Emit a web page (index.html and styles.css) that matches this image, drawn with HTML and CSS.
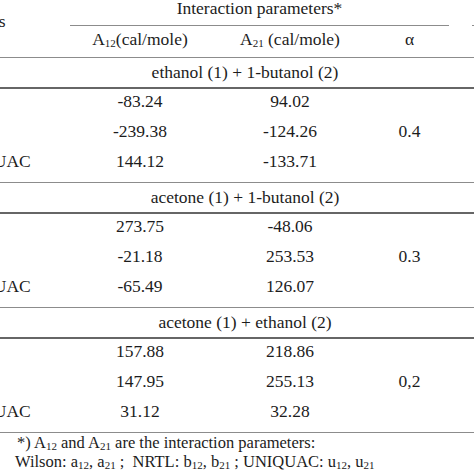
FILE: index.html
```html
<!DOCTYPE html>
<html lang="en">
<head>
  <meta charset="UTF-8" />
  <meta name="viewport" content="width=device-width, initial-scale=1.0" />
  <title>Interaction parameters</title>
  <link rel="stylesheet" href="styles.css">
</head>
<body>
  <div class="sheet">
    <div class="head">
      <div class="model-h">Models</div>
      <div class="span-h">Interaction parameters*</div>
      <div class="next-h"></div>
      <div class="col-h">A<sub>12</sub>(cal/mole)</div>
      <div class="col-h">A<sub>21</sub> (cal/mole)</div>
      <div class="col-h">α</div>
    </div>

    <div class="group">
      <div class="group-title">ethanol (1) + 1-butanol (2)</div>
      <div class="rows">
        <div class="row"><span class="model">Wilson</span><span>-83.24</span><span>94.02</span><span></span></div>
        <div class="row"><span class="model">NRTL</span><span>-239.38</span><span>-124.26</span><span>0.4</span></div>
        <div class="row"><span class="model">UNIQUAC</span><span>144.12</span><span>-133.71</span><span></span></div>
      </div>
    </div>

    <div class="group">
      <div class="group-title">acetone (1) + 1-butanol (2)</div>
      <div class="rows">
        <div class="row"><span class="model">Wilson</span><span>273.75</span><span>-48.06</span><span></span></div>
        <div class="row"><span class="model">NRTL</span><span>-21.18</span><span>253.53</span><span>0.3</span></div>
        <div class="row"><span class="model">UNIQUAC</span><span>-65.49</span><span>126.07</span><span></span></div>
      </div>
    </div>

    <div class="group">
      <div class="group-title">acetone (1) + ethanol (2)</div>
      <div class="rows">
        <div class="row"><span class="model">Wilson</span><span>157.88</span><span>218.86</span><span></span></div>
        <div class="row"><span class="model">NRTL</span><span>147.95</span><span>255.13</span><span>0,2</span></div>
        <div class="row"><span class="model">UNIQUAC</span><span>31.12</span><span>32.28</span><span></span></div>
      </div>
    </div>

    <div class="note">
      <p>*) A<sub>12</sub> and A<sub>21</sub> are the interaction parameters:</p>
      <p>Wilson: a<sub>12</sub>, a<sub>21</sub> ;&nbsp; NRTL: b<sub>12</sub>, b<sub>21</sub> ; UNIQUAC: u<sub>12</sub>, u<sub>21</sub></p>
    </div>
  </div>
</body>
</html>
```

FILE: styles.css
```css
:root {
  --ink: #1c1c1c;
  --rule-thin: #8c8c8c;
  --rule-thick: #666;
  --cols: 70px 140px 160px 79px 23px 2px;
}

html, body {
  margin: 0;
  background: #fff;
  overflow: hidden;
}

.sheet {
  width: 474px;
  font-family: "Liberation Serif", "Times New Roman", serif;
  font-size: 17.5px;
  color: var(--ink);
}

sub {
  font-size: 11px;
  vertical-align: -2px;
  line-height: 0;
}

/* header */
.head {
  display: grid;
  grid-template-columns: var(--cols);
  grid-template-rows: 26px 31px;
  border-bottom: 1px solid var(--rule-thin);
}

.model-h {
  grid-row: 1 / 3;
  margin-left: -47px;
  padding-top: 11px;
  line-height: 20px;
  white-space: nowrap;
}

.span-h {
  grid-column: 2 / 5;
  text-align: center;
  line-height: 16px;
  border-bottom: 1px solid var(--rule-thin);
}

.next-h {
  grid-column: 6;
  border-bottom: 1px solid var(--rule-thin);
}

.col-h {
  grid-row: 2;
  text-align: center;
  line-height: 22px;
  padding-top: 2px;
  white-space: nowrap;
}

.col-h:nth-of-type(4) { grid-column: 2; }
.col-h:nth-of-type(5) { grid-column: 3; }
.col-h:nth-of-type(6) { grid-column: 4; }

/* groups */
.group {
  border-bottom: 1px solid var(--rule-thin);
}

.group-title {
  height: 29px;
  line-height: 29px;
  padding-left: 16px;
  text-align: center;
  border-bottom: 2px solid var(--rule-thick);
}

.rows {
  display: flex;
  flex-direction: column;
  gap: 6px;
  padding-bottom: 9px;
}

.row {
  display: grid;
  grid-template-columns: var(--cols);
  line-height: 24px;
  text-align: center;
}

.row .model {
  margin-left: -50px;
  text-align: left;
  white-space: nowrap;
}

/* footnote */
.note {
  padding-left: 15px;
  font-size: 16.5px;
  line-height: 19px;
}

.note p {
  margin: 0;
  white-space: nowrap;
}

.note p:first-child {
  padding-left: 2px;
}
```
